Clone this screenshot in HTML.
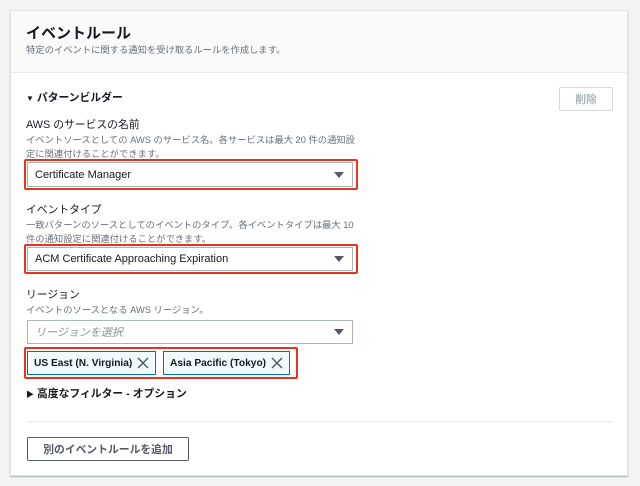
<!DOCTYPE html>
<html><head><meta charset="utf-8"><style>
*{box-sizing:border-box;margin:0;padding:0}
body{width:640px;height:486px;background:#f2f3f3;font-family:"Liberation Sans","Noto Sans CJK JP",sans-serif;color:#16191f;position:relative;overflow:hidden}
.card{position:absolute;left:10px;top:10px;width:618px;height:466px;background:#fff;border:1px solid #e1e4e4;box-shadow:0 1px 1px rgba(0,28,36,.3)}
.hdr{position:absolute;left:0;top:0;width:100%;height:62px;background:#fafafa;border-bottom:1px solid #eaeded}
.a{position:absolute;white-space:nowrap;line-height:1.2}
.t{font-size:15px;font-weight:bold;line-height:20px}
.g{font-size:9.3px;color:#687078;line-height:14px}
.l{font-size:10.8px;line-height:14px}
.b{font-weight:bold}
.sel{position:absolute;border:1px solid #aab7b8;background:#fff;font-size:11px;padding-left:7px;display:flex;align-items:center}
.sel .ar{position:absolute;right:8px;top:50%;margin-top:-3px;width:0;height:0;border-left:5px solid transparent;border-right:5px solid transparent;border-top:6px solid #545b64}
.red{position:absolute;border:2px solid #e8331f;border-radius:2px}
.tok{position:absolute;background:#f1faff;border:1px solid #0073bb;font-size:10.2px;font-weight:bold;padding-left:6px;display:flex;align-items:center}
.x{position:absolute;right:6px;top:5px;width:12px;height:12px}
.btn{position:absolute;border:1px solid #545b64;border-radius:2px;background:#fff;font-size:10.8px;font-weight:bold;color:#545b64;display:flex;align-items:center;justify-content:center}
</style></head><body>
<div class="card">
<div class="hdr"></div>
<div class="a t" style="left:15px;top:13px">イベントルール</div>
<div class="a g" style="left:15px;top:32px">特定のイベントに関する通知を受け取るルールを作成します。</div>
<div class="a l b" style="left:15px;top:80px"><span style="font-size:8px">▼</span> パターンビルダー</div>
<div class="btn" style="left:548px;top:76px;width:54px;height:24px;border-color:#d5dbdb;color:#aab7b8">削除</div>
<div class="a l" style="left:15px;top:107px">AWS のサービスの名前</div>
<div class="a g" style="left:15px;top:122px">イベントソースとしての AWS のサービス名。各サービスは最大 20 件の通知設<br>定に関連付けることができます。</div>
<div class="red" style="left:13px;top:148px;width:334px;height:31px"></div>
<div class="sel" style="left:16px;top:151px;width:326px;height:25px">Certificate Manager<div class="ar"></div></div>
<div class="a l" style="left:15px;top:192px">イベントタイプ</div>
<div class="a g" style="left:15px;top:207px">一致パターンのソースとしてのイベントのタイプ。各イベントタイプは最大 10<br>件の通知設定に関連付けることができます。</div>
<div class="red" style="left:13px;top:233px;width:334px;height:30px"></div>
<div class="sel" style="left:16px;top:236px;width:326px;height:24px">ACM Certificate Approaching Expiration<div class="ar"></div></div>
<div class="a l" style="left:15px;top:277px">リージョン</div>
<div class="a g" style="left:15px;top:292px">イベントのソースとなる AWS リージョン。</div>
<div class="sel" style="left:16px;top:309px;width:326px;height:24px;color:#879596;font-style:italic">リージョンを選択<div class="ar"></div></div>
<div class="red" style="left:13px;top:336px;width:274px;height:32px"></div>
<div class="tok" style="left:16px;top:340px;width:129px;height:24px">US East (N. Virginia)<svg class="x" viewBox="0 0 12 12"><path d="M1 1L11 11M11 1L1 11" stroke="#545b64" stroke-width="1.5"/></svg></div>
<div class="tok" style="left:152px;top:340px;width:127px;height:24px">Asia Pacific (Tokyo)<svg class="x" viewBox="0 0 12 12"><path d="M1 1L11 11M11 1L1 11" stroke="#545b64" stroke-width="1.5"/></svg></div>
<div class="a l b" style="left:15px;top:376px"><span style="font-size:8px">▶</span> 高度なフィルター - オプション</div>
<div class="a" style="left:16px;top:410px;width:586px;border-top:1px solid #eaeded"></div>
<div class="btn" style="left:16px;top:426px;width:162px;height:24px;color:#545b64">別のイベントルールを追加</div>
</div>
</body></html>
